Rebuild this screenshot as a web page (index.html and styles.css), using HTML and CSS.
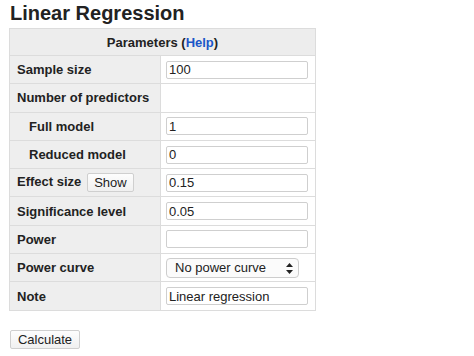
FILE: index.html
```html
<!DOCTYPE html>
<html lang="en">
<head>
  <meta charset="UTF-8" />
  <title>Linear Regression</title>
  <link rel="stylesheet" href="styles.css">
</head>
<body>
  <h2>Linear Regression</h2>

  <table class="params">
    <colgroup>
      <col class="col-label">
      <col class="col-value">
    </colgroup>
    <tr>
      <th colspan="2">Parameters (<a href="#">Help</a>)</th>
    </tr>
    <tr>
      <td class="label">Sample size</td>
      <td class="value"><input type="text" value="100" /></td>
    </tr>
    <tr>
      <td class="label">Number of predictors</td>
      <td class="value"></td>
    </tr>
    <tr>
      <td class="label sub">Full model</td>
      <td class="value"><input type="text" value="1" /></td>
    </tr>
    <tr>
      <td class="label sub">Reduced model</td>
      <td class="value"><input type="text" value="0" /></td>
    </tr>
    <tr>
      <td class="label">Effect size <button class="show-btn">Show</button></td>
      <td class="value"><input type="text" value="0.15" /></td>
    </tr>
    <tr>
      <td class="label">Significance level</td>
      <td class="value"><input type="text" value="0.05" /></td>
    </tr>
    <tr>
      <td class="label">Power</td>
      <td class="value"><input type="text" value="" /></td>
    </tr>
    <tr>
      <td class="label">Power curve</td>
      <td class="value">
        <span class="select-wrap">
          <select>
            <option>No power curve</option>
            <option>Show power curve</option>
          </select>
          <svg class="arrows" width="7" height="11" viewBox="0 0 7 11">
            <path d="M3.5 0 L7 4 L0 4 Z M0 7 L7 7 L3.5 11 Z" fill="#222"/>
          </svg>
        </span>
      </td>
    </tr>
    <tr>
      <td class="label">Note</td>
      <td class="value"><input type="text" value="Linear regression" /></td>
    </tr>
  </table>

  <button class="calc-btn">Calculate</button>
</body>
</html>
```

FILE: styles.css
```css
body {
  margin: 0;
  padding: 0 9px;
  font-family: "Liberation Sans", Arial, sans-serif;
  color: #222;
  background: #fff;
}
h2 {
  font-size: 20px;
  line-height: 23px;
  margin: 2px 0 3px 1px;
  font-weight: bold;
}
.params {
  border-collapse: collapse;
  table-layout: fixed;
  border: 1px solid #dcdcdc;
  width: 307px;
  font-size: 13px;
}
.col-label {
  width: 151px;
}
.col-value {
  width: 155px;
}
.params th {
  background: #ededed;
  height: 26px;
  padding: 0;
  font-weight: bold;
  text-align: center;
  border-bottom: 1px solid #dcdcdc;
}
.params th a {
  color: #1a56c8;
  text-decoration: none;
}
.params td {
  height: 27.3px;
  padding: 0;
  border-top: 1px solid #dcdcdc;
  vertical-align: middle;
}
.params td.label {
  background: #eeeeee;
  font-weight: bold;
  padding-left: 7px;
  border-right: 1px solid #dcdcdc;
  white-space: nowrap;
}
.params td.sub {
  padding-left: 19px;
}
.params td.value {
  background: #fff;
  padding-left: 5px;
}
.value input {
  box-sizing: border-box;
  width: 142px;
  height: 18px;
  border: 1px solid #cfcfcf;
  border-radius: 2px;
  padding: 0 2px;
  font-family: "Liberation Sans", Arial, sans-serif;
  font-size: 13px;
  color: #222;
  display: block;
}
.select-wrap {
  position: relative;
  display: block;
  width: 133px;
}
.select-wrap select {
  appearance: none;
  -webkit-appearance: none;
  box-sizing: border-box;
  width: 133px;
  height: 20px;
  border: 1px solid #cdcdcd;
  border-radius: 4px;
  background: #fbfbfb;
  padding: 0 0 0 8px;
  font-family: "Liberation Sans", Arial, sans-serif;
  font-size: 13px;
  color: #222;
  display: block;
}
.select-wrap .arrows {
  position: absolute;
  right: 6px;
  top: 5px;
  pointer-events: none;
}
.show-btn {
  box-sizing: border-box;
  height: 19px;
  width: 47px;
  margin-left: 2px;
  padding: 0;
  font-family: "Liberation Sans", Arial, sans-serif;
  font-size: 13px;
  font-weight: normal;
  color: #222;
  background: linear-gradient(#fdfdfd, #f0f0f0);
  border: 1px solid #cfcfcf;
  border-radius: 2px;
  vertical-align: middle;
}
.calc-btn {
  box-sizing: border-box;
  margin: 19px 0 0 1px;
  height: 19px;
  width: 70px;
  padding: 0;
  font-family: "Liberation Sans", Arial, sans-serif;
  font-size: 13px;
  color: #222;
  background: linear-gradient(#fdfdfd, #f0f0f0);
  border: 1px solid #cfcfcf;
  border-radius: 2px;
  display: block;
}
```
